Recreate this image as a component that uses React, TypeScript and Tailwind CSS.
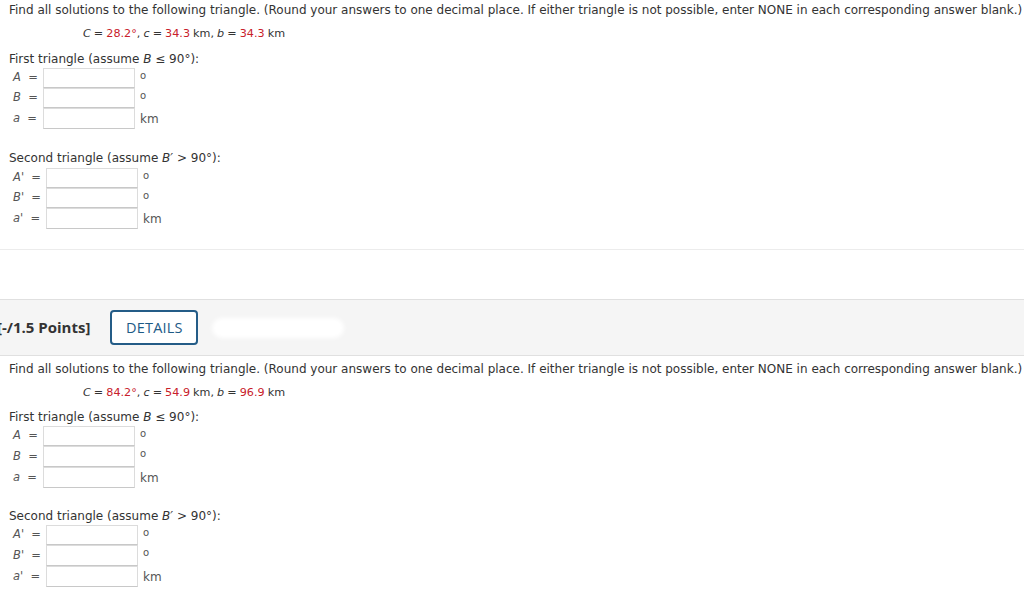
import React from "react";

const R = ({ children }: { children: React.ReactNode }) => (
  <span className="text-[#c8202a]">{children}</span>
);
const I = ({ children }: { children: React.ReactNode }) => <i>{children}</i>;

type Row = { label: React.ReactNode; unit: "deg" | "km"; h: string };

function Rows({ rows, labelW, inputW }: { rows: Row[]; labelW: string; inputW: string }) {
  return (
    <div className="flex flex-col">
      {rows.map((r, i) => (
        <div key={i} className={`flex items-stretch ${r.h}`}>
          <div className={`${labelW} pl-[13px] flex items-center whitespace-nowrap text-[#555] text-[11.5px]`}>{r.label}</div>
          <div className={`${inputW} border border-[#dcdcdc] border-b-[#c8c8c8] bg-white`} />
          <div className="pl-[5px] flex items-center">
            {r.unit === "deg" ? (
              <span className="relative -top-[3px] text-[10px] text-[#555]">o</span>
            ) : (
              <span className="text-[#555]">km</span>
            )}
          </div>
        </div>
      ))}
    </div>
  );
}

function Problem({
  C,
  c,
  b,
  gaps,
  heights1,
  heights2,
}: {
  C: string;
  c: string;
  b: string;
  gaps: { p2: string; first: string; second: string; rows2: string };
  heights1: string[];
  heights2: string[];
}) {
  return (
    <div>
      <p className="pl-[9px] h-[16px] leading-[16px] whitespace-nowrap">
        Find all solutions to the following triangle. (Round your answers to one decimal place. If either triangle is not
        possible, enter NONE in each corresponding answer blank.)
      </p>
      <p className={`pl-[83px] h-[16px] leading-[16px] whitespace-nowrap text-[11.2px] [word-spacing:-0.5px] ${gaps.p2}`}>
        <I>C</I> = <R>{C}°</R>, <I>c</I> = <R>{c}</R> km, <I>b</I> = <R>{b}</R> km
      </p>
      <p className={`pl-[9px] h-[16px] leading-[16px] whitespace-nowrap ${gaps.first}`}>
        First triangle (assume <I>B</I> ≤ 90°):
      </p>
      <div className="mt-[1px]">
        <Rows
          labelW="w-[43px]"
          inputW="w-[92px]"
          rows={[
            { label: <><I>A</I>&nbsp;&nbsp;=</>, unit: "deg", h: heights1[0] },
            { label: <><I>B</I>&nbsp;&nbsp;=</>, unit: "deg", h: heights1[1] },
            { label: <><I>a</I>&nbsp;&nbsp;=</>, unit: "km", h: heights1[2] },
          ]}
        />
      </div>
      <p className={`pl-[9px] h-[16px] leading-[16px] whitespace-nowrap ${gaps.second}`}>
        Second triangle (assume <I>B′</I> &gt; 90°):
      </p>
      <div className={gaps.rows2}>
        <Rows
          labelW="w-[46px]"
          inputW="w-[92px]"
          rows={[
            { label: <><I>A</I>'&nbsp;&nbsp;=</>, unit: "deg", h: heights2[0] },
            { label: <><I>B</I>'&nbsp;&nbsp;=</>, unit: "deg", h: heights2[1] },
            { label: <><I>a</I>'&nbsp;&nbsp;=</>, unit: "km", h: heights2[2] },
          ]}
        />
      </div>
    </div>
  );
}

export default function App() {
  return (
    <div className="w-[1024px] h-[594px] overflow-hidden bg-white font-['DejaVu_Sans','Liberation_Sans',sans-serif] text-[12px] text-[#333]">
      <div className="pt-[2px]">
        <Problem
          C="28.2"
          c="34.3"
          b="34.3"
          gaps={{ p2: "mt-[8px]", first: "mt-[9px]", second: "mt-[21px]", rows2: "mt-[2px]" }}
          heights1={["h-[20px]", "h-[20px]", "h-[21px]"]}
          heights2={["h-[20px]", "h-[20px]", "h-[21px]"]}
        />
      </div>
      <div className="mt-[20px] border-t border-[#ececec]" />
      <div className="mt-[49px] h-[57px] bg-[#f5f5f5] border-y border-[#e0e0e0] flex items-center">
        <span className="-ml-[3px] font-['Open_Sans',sans-serif] font-bold text-[15px] text-[#333] whitespace-nowrap">[-/1.5 Points]</span>
        <div className="ml-[20px] w-[88px] h-[35px] rounded-[4px] border-2 border-[#245c87] bg-white flex items-center justify-center font-['Open_Sans',sans-serif] font-medium text-[14.5px] text-[#1d5a86] tracking-[0.2px]">
          DETAILS
        </div>
        <div className="ml-[14px] w-[132px] h-[20px] bg-white rounded-full blur-[2px]" />
      </div>
      <div className="mt-[5px]">
        <Problem
          C="84.2"
          c="54.9"
          b="96.9"
          gaps={{ p2: "mt-[8px]", first: "mt-[8px]", second: "mt-[20px]", rows2: "mt-[1px]" }}
          heights1={["h-[20px]", "h-[21px]", "h-[21px]"]}
          heights2={["h-[20px]", "h-[21px]", "h-[21px]"]}
        />
      </div>
    </div>
  );
}
